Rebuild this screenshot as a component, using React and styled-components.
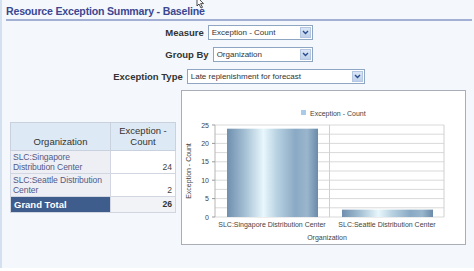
import React from "react";
import styled, { createGlobalStyle } from "styled-components";

const GlobalStyle = createGlobalStyle`
  html, body { margin: 0; padding: 0; background: #ffffff; }
  body { font-family: "Liberation Sans", Arial, sans-serif; }
  * { box-sizing: border-box; }
`;

const Page = styled.div`
  position: relative;
  width: 474px;
  height: 268px;
  background: #f4f8fc;
  border-left: 2px solid #d3e0ef;
  padding-left: 1px;
  overflow: hidden;
`;

const Header = styled.div`
  margin: 0 2px 0 3px;
  height: 21px;
  border-bottom: 2px solid #a4b0d3;
  padding-top: 4px;
`;

const Title = styled.h1`
  margin: 0;
  font-size: 10.6px;
  line-height: 14px;
  font-weight: bold;
  color: #3b4791;
  letter-spacing: -0.2px;
`;

const Cursor = styled.svg`
  position: absolute;
  left: 194px;
  top: -3px;
`;

const Form = styled.div`
  display: flex;
  flex-direction: column;
  align-items: center;
  gap: 7px;
  margin-top: 4px;
  padding-left: 1px;
`;

const FieldRow = styled.div`
  display: flex;
  align-items: center;
  gap: 4px;
  height: 15px;
`;

const Label = styled.label`
  font-size: 9.5px;
  font-weight: bold;
  color: #333;
`;

const Select = styled.div`
  position: relative;
  width: ${(p) => p.$w}px;
  height: 15px;
  background: #fff;
  border: 1px solid #8fa6c2;
  font-size: 8px;
  line-height: 13px;
  color: #333;
  padding-left: 3px;
`;

const DropButton = styled.span`
  position: absolute;
  right: 1px;
  top: 1px;
  width: 11px;
  height: 11px;
  background: linear-gradient(#dbe6f5, #bed0ea);
  border: 1px solid #b3c6e2;
  display: flex;
  align-items: center;
  justify-content: center;
`;

const Content = styled.div`
  display: flex;
  align-items: flex-start;
  margin-top: 6px;
`;

const Table = styled.table`
  margin: 32px 0 0 7px;
  width: 165px;
  border-collapse: collapse;
  font-size: 8.6px;
  table-layout: fixed;
`;

const HeadCell = styled.th`
  background: #dde9f4;
  border: 1px solid #c9d1de;
  font-weight: normal;
  font-size: 9.5px;
  color: #333;
  vertical-align: bottom;
  text-align: center;
  padding: 2px 2px 3px;
  height: 28px;
  line-height: 11px;
  width: ${(p) => p.$w}px;
`;

const RowHead = styled.td`
  background: #eeeff5;
  border: 1px solid #d2d6e0;
  color: #525a86;
  padding: 1px 2px;
  line-height: 10px;
  height: 21px;
  vertical-align: top;
  letter-spacing: -0.1px;
`;

const NumCell = styled.td`
  background: #ffffff;
  border: 1px solid #d2d6e0;
  text-align: right;
  color: #444;
  padding: 0 3px 1px;
  vertical-align: bottom;
`;

const TotalHead = styled.td`
  background: #3e5c8c;
  border: 1px solid #d2d6e0;
  color: #fff;
  font-weight: bold;
  font-size: 9.5px;
  padding: 1px 3px;
  height: 16px;
`;

const TotalNum = styled(NumCell)`
  background: #f2f3f7;
  font-weight: bold;
  color: #333;
  vertical-align: middle;
`;

const ChartBox = styled.div`
  margin-left: 5px;
  width: 285px;
  height: 155px;
  background: #fff;
  border: 1px solid #a9adb5;
`;

const Chevron = () => (
  <svg width="7" height="5" viewBox="0 0 7 5">
    <path d="M1 1 L3.5 3.5 L6 1" fill="none" stroke="#2b4c8c" strokeWidth="1.4" />
  </svg>
);

const Field = ({ label, value, width }) => (
  <FieldRow>
    <Label>{label}</Label>
    <Select $w={width}>
      {value}
      <DropButton>
        <Chevron />
      </DropButton>
    </Select>
  </FieldRow>
);

const Chart = () => {
  const left = 33;
  const right = 262;
  const top = 34;
  const bottom = 126;
  const scale = (bottom - top) / 25;
  const grid = [];
  for (let v = 0; v <= 25; v += 2.5) grid.push(v);
  const y = (v) => bottom - v * scale;
  const t = { fontSize: 7, fill: "#444", fontFamily: "Liberation Sans, Arial, sans-serif" };
  return (
    <svg width="283" height="153" viewBox="0 0 283 153">
      <defs>
        <linearGradient id="bar" x1="0" x2="1" y1="0" y2="0">
          <stop offset="0" stopColor="#6f8fae" />
          <stop offset="0.18" stopColor="#9fbbd0" />
          <stop offset="0.4" stopColor="#e8f7fc" />
          <stop offset="0.55" stopColor="#b8d2e2" />
          <stop offset="0.75" stopColor="#8aa9c4" />
          <stop offset="0.88" stopColor="#9ab6cd" />
          <stop offset="1" stopColor="#6a8aa9" />
        </linearGradient>
      </defs>
      <rect x="119" y="19" width="5" height="5" fill="#a9cbe8" />
      <text x="128" y="24.5" {...t}>Exception - Count</text>
      {grid.map((v) => (
        <line key={v} x1={left} x2={right} y1={y(v)} y2={y(v)} stroke="#d9d9d9" strokeWidth="1" />
      ))}
      <line x1={left} x2={left} y1={top} y2={bottom} stroke="#b5b5b5" />
      <line x1={right} x2={right} y1={top} y2={bottom} stroke="#d0d0d0" />
      <line x1="147.5" x2="147.5" y1={top} y2={bottom} stroke="#d0d0d0" />
      {[0, 5, 10, 15, 20, 25].map((v) => (
        <g key={v}>
          <line x1={left - 3} x2={left} y1={y(v)} y2={y(v)} stroke="#999" />
          <text x={left - 6} y={y(v) + 2.5} textAnchor="end" {...t}>{v}</text>
        </g>
      ))}
      <rect x="45" y={y(24)} width="91" height={24 * scale} fill="url(#bar)" />
      <rect x="160" y={y(2)} width="91" height={2 * scale} fill="url(#bar)" />
      <text x="90" y="136" textAnchor="middle" {...t}>SLC:Singapore Distribution Center</text>
      <text x="205" y="136" textAnchor="middle" {...t}>SLC:Seattle Distribution Center</text>
      <text x="145" y="149" textAnchor="middle" {...t}>Organization</text>
      <text transform="translate(9 80) rotate(-90)" textAnchor="middle" {...t}>Exception - Count</text>
    </svg>
  );
};

export default function App() {
  return (
    <>
      <GlobalStyle />
      <Page>
        <Header>
          <Title>Resource Exception Summary - Baseline</Title>
        </Header>
        <Cursor width="10" height="12" viewBox="0 0 10 12">
          <path d="M1 0 L1 9 L3 7 L5 11 L6.5 10.3 L4.6 6.6 L7.5 6.6 Z" fill="#fff" stroke="#222" strokeWidth="0.8" />
        </Cursor>
        <Form>
          <Field label="Measure" value="Exception - Count" width={105} />
          <Field label="Group By" value="Organization" width={100} />
          <Field label="Exception Type" value="Late replenishment for forecast" width={178} />
        </Form>
        <Content>
          <Table>
            <colgroup>
              <col style={{ width: 100 }} />
              <col style={{ width: 65 }} />
            </colgroup>
            <thead>
              <tr>
                <HeadCell>Organization</HeadCell>
                <HeadCell>Exception -<br />Count</HeadCell>
              </tr>
            </thead>
            <tbody>
              <tr>
                <RowHead>SLC:Singapore Distribution Center</RowHead>
                <NumCell>24</NumCell>
              </tr>
              <tr>
                <RowHead>SLC:Seattle Distribution Center</RowHead>
                <NumCell>2</NumCell>
              </tr>
              <tr>
                <TotalHead>Grand Total</TotalHead>
                <TotalNum>26</TotalNum>
              </tr>
            </tbody>
          </Table>
          <ChartBox>
            <Chart />
          </ChartBox>
        </Content>
      </Page>
    </>
  );
}
